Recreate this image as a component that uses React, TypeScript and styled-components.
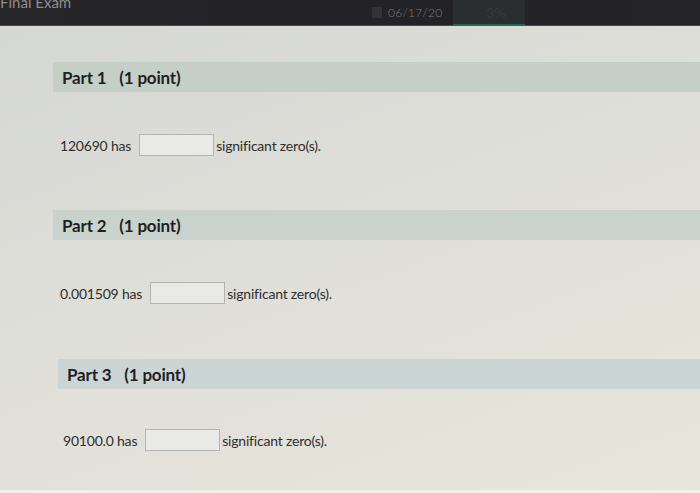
import React from "react";
import styled, { createGlobalStyle } from "styled-components";

const Global = createGlobalStyle`
  html, body { margin: 0; padding: 0; }
  body {
    width: 700px;
    height: 493px;
    overflow: hidden;
    font-family: Lato, "Noto Sans", "Liberation Sans", sans-serif;
    background: #dcddd8;
  }
`;

const Page = styled.div`
  width: 700px;
  height: 493px;
  display: flex;
  flex-direction: column;
  overflow: hidden;
`;

const TopBar = styled.div`
  height: 25px;
  flex: none;
  background: linear-gradient(90deg, #262629 0%, #232327 60%, #252528 100%);
  border-bottom: 1px solid #4a4a48;
  display: flex;
  align-items: stretch;
`;

const Title = styled.div`
  font-size: 15px;
  color: #8d8d90;
  line-height: 15px;
  margin-top: -5px;
  width: 372px;
  flex: none;
  white-space: nowrap;
`;

const DateBox = styled.div`
  display: flex;
  align-items: center;
  gap: 6px;
  width: 81px;
  flex: none;
  font-size: 12px;
  font-weight: 300;
  color: #7b7b7f;
  letter-spacing: 0.3px;
`;

const CalIcon = styled.span`
  width: 10px;
  height: 11px;
  background: #333337;
  display: inline-block;
`;

const ScoreTab = styled.div`
  width: 72px;
  flex: none;
  background: #2a2e2f;
  border-bottom: 3px solid #1f6a55;
  margin-bottom: -2px;
  display: flex;
  align-items: center;
  justify-content: center;
  font-size: 14px;
  color: #363c3e;
  padding-left: 14px;
  box-sizing: border-box;
`;

const Content = styled.div`
  flex: 1;
  background: linear-gradient(160deg, #d5d7d3 0%, #dfdfd9 45%, #e8e5da 100%);
  padding-top: 36px;
  display: flex;
  flex-direction: column;
  border-bottom: 3px solid #f2f0ea;
`;

const Section = styled.section<{ $indent: number; $after: number }>`
  margin-left: ${(p) => p.$indent}px;
  margin-bottom: ${(p) => p.$after}px;
  display: flex;
  flex-direction: column;
`;

const Header = styled.div<{ $tone: string }>`
  height: 30px;
  background: ${(p) => p.$tone};
  display: flex;
  align-items: center;
  padding-left: 9px;
  font-size: 17px;
  font-weight: 700;
  color: #1f1f1f;
  letter-spacing: -0.2px;
`;

const Points = styled.span`
  margin-left: 13px;
`;

const Row = styled.div<{ $gap: number; $pad: number }>`
  margin-top: ${(p) => p.$gap}px;
  padding-left: ${(p) => p.$pad}px;
  display: flex;
  align-items: center;
  height: 22px;
  font-size: 14px;
  color: #2e2e2e;
  letter-spacing: -0.2px;
`;

const Answer = styled.input`
  width: 75px;
  height: 22px;
  box-sizing: border-box;
  border: 1px solid #b3b4b0;
  background: #e9e9e5;
  margin: 0 2px 0 8px;
  padding: 0;
  outline: none;
`;

const parts = [
  { n: 1, q: "120690 has", tone: "#c5cfc8", indent: 53, after: 54, gap: 42, pad: 7 },
  { n: 2, q: "0.001509 has", tone: "#cad2ce", indent: 53, after: 55, gap: 42, pad: 7 },
  { n: 3, q: "90100.0 has", tone: "#cbd5d6", indent: 58, after: 0, gap: 40, pad: 5 },
];

export default function App() {
  return (
    <Page>
      <Global />
      <TopBar>
        <Title>Final Exam</Title>
        <DateBox>
          <CalIcon />
          06/17/20
        </DateBox>
        <ScoreTab>3%</ScoreTab>
      </TopBar>
      <Content>
        {parts.map((p) => (
          <Section key={p.n} $indent={p.indent} $after={p.after}>
            <Header $tone={p.tone}>
              Part {p.n}
              <Points>(1 point)</Points>
            </Header>
            <Row $gap={p.gap} $pad={p.pad}>
              {p.q}
              <Answer type="text" />
              significant zero(s).
            </Row>
          </Section>
        ))}
      </Content>
    </Page>
  );
}
